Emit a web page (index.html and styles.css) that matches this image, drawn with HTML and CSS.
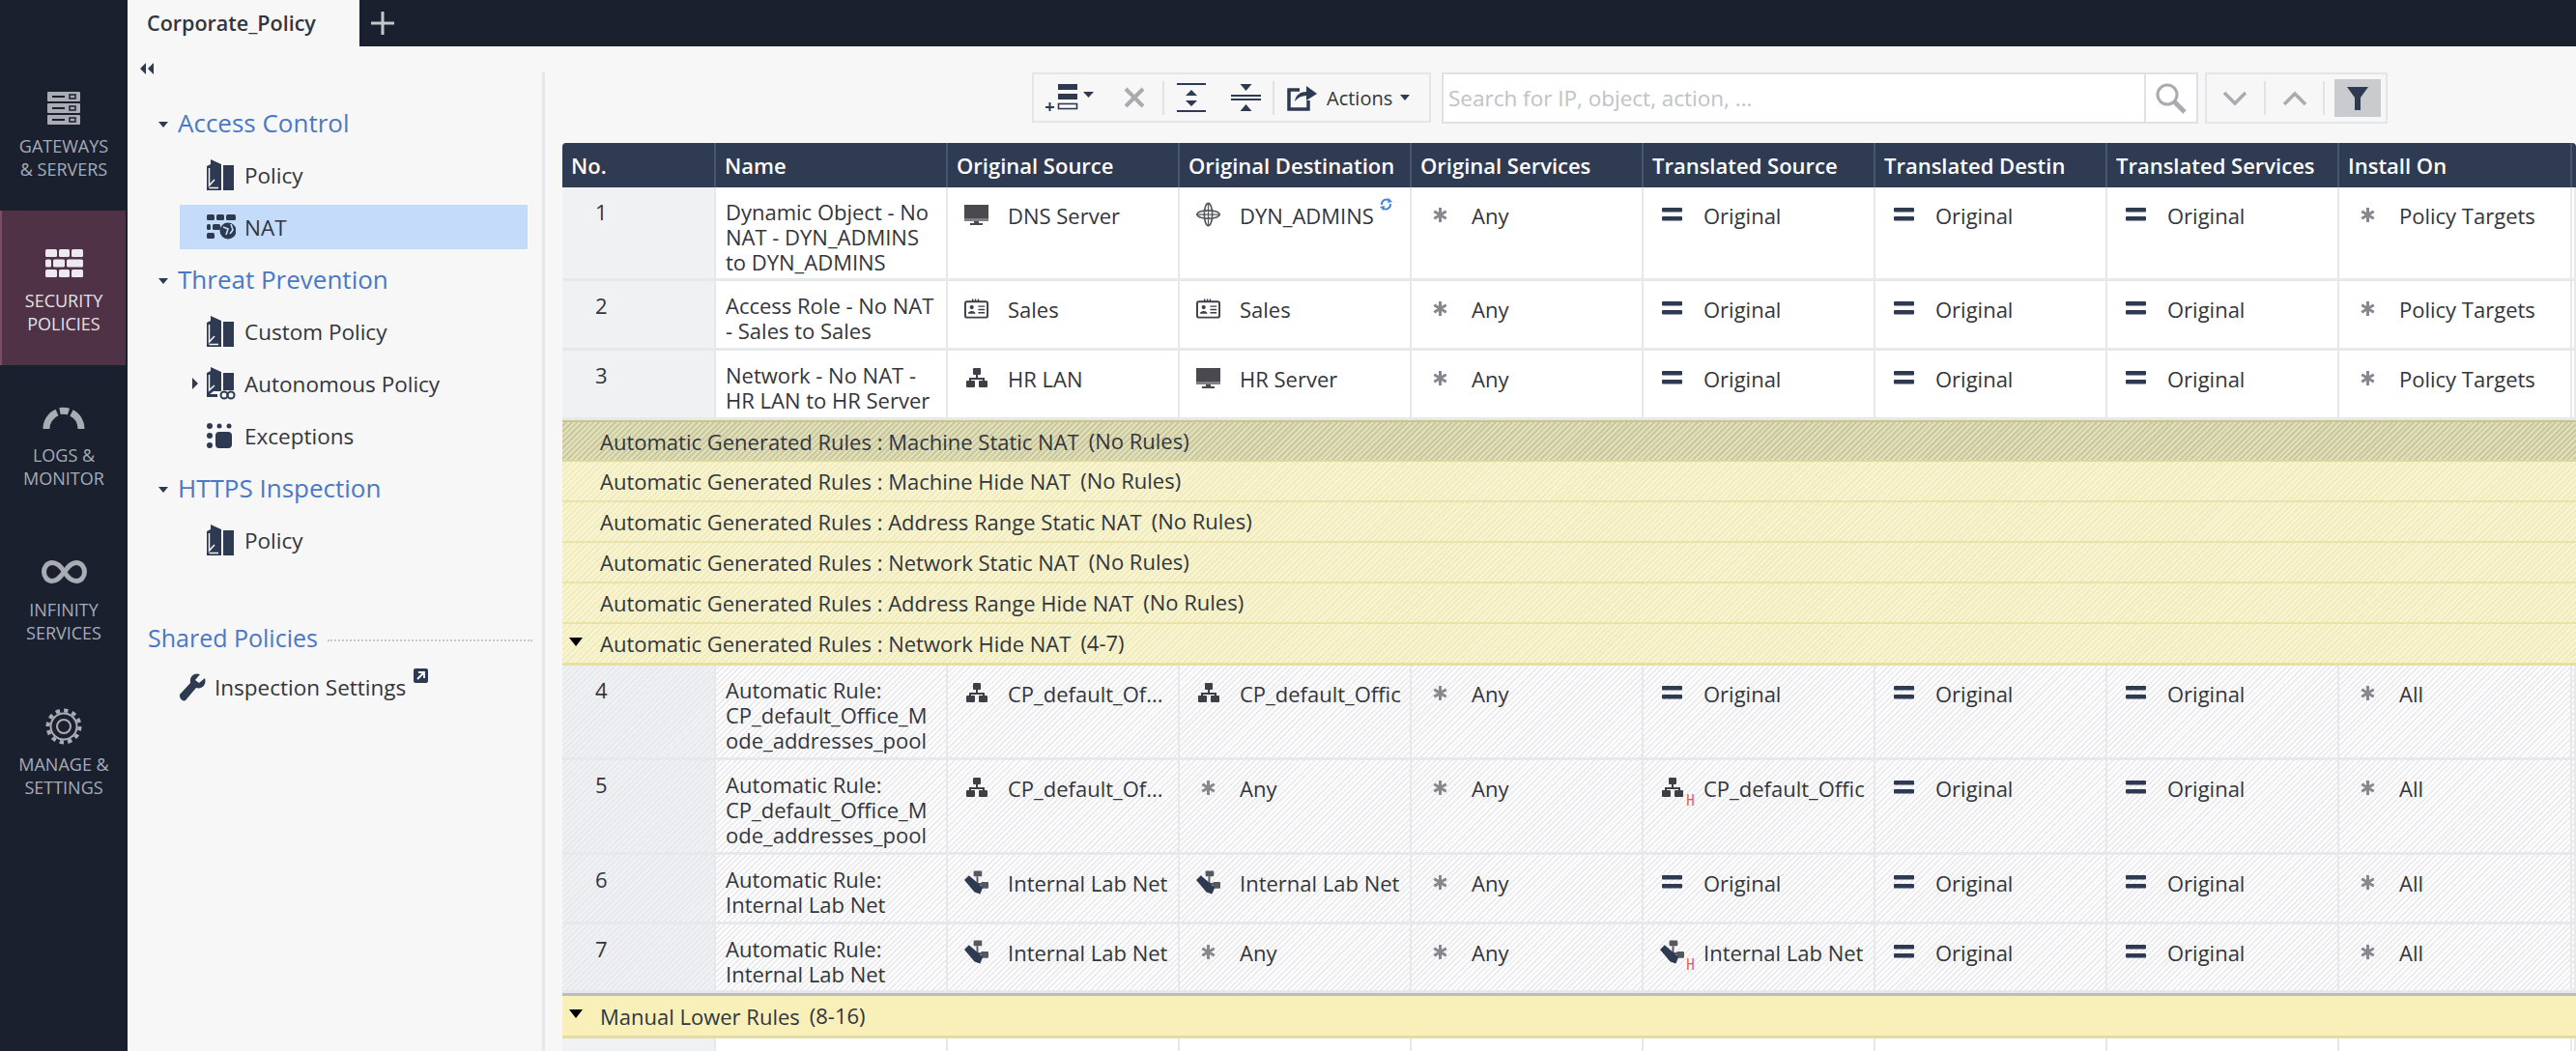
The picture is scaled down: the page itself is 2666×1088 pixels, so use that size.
FILE: index.html
```html
<!DOCTYPE html>
<html lang="en">

<head>
    <meta charset="UTF-8">
    <title>Corporate_Policy</title>
    <link rel="stylesheet" href="styles.css">
</head>

<body>
    <svg class="defs" width="0" height="0">
        <symbol id="i-book" viewBox="0 0 28 32">
            <path d="M0 7 L4 5 V0 L15 5 V32 H0 Z" fill="#2e3a52" />
            <path d="M2.5 9 V27 L8 21 M2.5 29.5 H12" fill="none" stroke="#f7f7f7" stroke-width="1.5" />
            <rect x="17" y="6" width="11" height="26" fill="#2e3a52" />
        </symbol>
        <symbol id="i-monitor" viewBox="0 0 25 21">
            <rect x="0" y="0" width="25" height="14" fill="#4a4a4e" />
            <rect x="0" y="14" width="25" height="3" fill="#7d8087" />
            <rect x="10" y="17" width="5" height="2" fill="#4a4a4e" />
            <rect x="6" y="19" width="13" height="2" fill="#4a4a4e" />
        </symbol>
        <symbol id="i-role" viewBox="0 0 26 21">
            <rect x="1" y="3" width="24" height="17" rx="2" fill="none" stroke="#3c3f46" stroke-width="2" />
            <path d="M9 0 V3 M12 0 V3 M15 0 V3" stroke="#3c3f46" stroke-width="1.5" />
            <circle cx="8" cy="9" r="2.2" fill="#3c3f46" />
            <path d="M4 16 C4 12 12 12 12 16 Z" fill="#3c3f46" />
            <path d="M15 8 H22 M15 11.5 H22 M15 15 H22" stroke="#3c3f46" stroke-width="1.5" />
        </symbol>
        <symbol id="i-tree" viewBox="0 0 22 20">
            <rect x="7" y="0" width="8" height="7" rx="1" fill="#3c3f46" />
            <path d="M11 7 V11 M4 14 V11 H18 V14" fill="none" stroke="#3c3f46" stroke-width="2" />
            <rect x="0" y="13" width="9" height="7" rx="1" fill="#3c3f46" />
            <rect x="13" y="13" width="9" height="7" rx="1" fill="#3c3f46" />
        </symbol>
        <symbol id="i-dyn" viewBox="0 0 30 30">
            <g fill="none" stroke="#55585e" stroke-width="2">
                <ellipse cx="15" cy="15" rx="14" ry="5" />
                <ellipse cx="15" cy="15" rx="5" ry="14" />
            </g>
            <path d="M15 1 V29 M1 15 H29" stroke="#55585e" stroke-width="1.5" />
        </symbol>
        <symbol id="i-any" viewBox="0 0 18 18">
            <path d="M9 0 V18 M1.5 4.5 L16.5 13.5 M16.5 4.5 L1.5 13.5" stroke="#85888e" stroke-width="3.6" />
        </symbol>
        <symbol id="i-same" viewBox="0 0 21 14">
            <rect x="0" y="0" width="21" height="4.5" rx="1" fill="#2e3a52" />
            <rect x="0" y="9" width="21" height="4.5" rx="1" fill="#2e3a52" />
        </symbol>
        <symbol id="i-lab" viewBox="0 0 26 25">
            <rect x="10" y="0" width="9" height="6" rx="1" fill="#55585e" />
            <path d="M14 6 V14 H20" fill="none" stroke="#55585e" stroke-width="2" />
            <rect x="18" y="12" width="8" height="7" rx="1" fill="#55585e" />
            <path d="M0 10 L5 5 L20 18 L17 25 L11 23 Z" fill="#2e3a52" />
        </symbol>
    </svg>

    <div class="app">
        <aside class="rail">
            <div class="rail-item">
                <div class="rail-icon">
                    <svg width="34" height="34" viewBox="0 0 34 34">
                        <g fill="#a9adb3">
                            <rect y="0" width="34" height="10" rx="1" />
                            <rect y="12" width="34" height="10" rx="1" />
                            <rect y="24" width="34" height="10" rx="1" />
                        </g>
                        <path d="M5 5 H18 M5 17 H18 M5 29 H18" stroke="#1a202e" stroke-width="2" />
                        <path d="M23 3 h6 v4 h-6 Z M23 15 h6 v4 h-6 Z M23 27 h6 v4 h-6 Z" fill="none" stroke="#1a202e" stroke-width="1.5" />
                    </svg>
                </div>
                <div class="rail-label">GATEWAYS<br>&amp; SERVERS</div>
            </div>
            <div class="rail-item rail-active">
                <div class="rail-icon">
                    <svg width="39" height="29" viewBox="0 0 39 29">
                        <g fill="#eceaf0">
                            <rect x="0" y="0" width="12" height="8" rx="1.5" />
                            <rect x="14" y="0" width="11" height="8" rx="1.5" />
                            <rect x="27" y="0" width="12" height="8" rx="1.5" />
                            <rect x="0" y="10.5" width="6" height="8" rx="1.5" />
                            <rect x="8" y="10.5" width="12" height="8" rx="1.5" />
                            <rect x="22" y="10.5" width="17" height="8" rx="1.5" />
                            <rect x="0" y="21" width="12" height="8" rx="1.5" />
                            <rect x="14" y="21" width="11" height="8" rx="1.5" />
                            <rect x="27" y="21" width="12" height="8" rx="1.5" />
                        </g>
                    </svg>
                </div>
                <div class="rail-label">SECURITY<br>POLICIES</div>
            </div>
            <div class="rail-item">
                <div class="rail-icon">
                    <svg width="44" height="24" viewBox="0 0 44 24">
                        <g fill="none" stroke="#a9adb3" stroke-width="7">
                            <path d="M4 24 A18 18 0 0 1 15 7" />
                            <path d="M18 5.5 A18 18 0 0 1 27 6" />
                            <path d="M30 7.5 A18 18 0 0 1 40 24" />
                        </g>
                    </svg>
                </div>
                <div class="rail-label">LOGS &amp;<br>MONITOR</div>
            </div>
            <div class="rail-item">
                <div class="rail-icon">
                    <svg width="49" height="26" viewBox="0 0 49 26">
                        <path d="M24.5 13 C19 4 15 3.5 12 3.5 C7 3.5 3.5 8 3.5 13 C3.5 18 7 22.5 12 22.5 C18 22.5 21 17 24.5 13 C28 9 31 3.5 37 3.5 C42 3.5 45.5 8 45.5 13 C45.5 18 42 22.5 37 22.5 C34 22.5 30 22 24.5 13 Z" fill="none" stroke="#a9adb3" stroke-width="5" />
                    </svg>
                </div>
                <div class="rail-label">INFINITY<br>SERVICES</div>
            </div>
            <div class="rail-item">
                <div class="rail-icon">
                    <svg width="38" height="38" viewBox="0 0 38 38">
                        <g fill="none" stroke="#a9adb3">
                            <circle cx="19" cy="19" r="16.5" stroke-width="4" stroke-dasharray="4.3 4.3" />
                            <circle cx="19" cy="19" r="13.5" stroke-width="2" />
                            <circle cx="19" cy="19" r="7" stroke-width="2" />
                        </g>
                    </svg>
                </div>
                <div class="rail-label">MANAGE &amp;<br>SETTINGS</div>
            </div>
        </aside>

        <div class="main">
            <header class="tabs">
                <div class="tab">Corporate_Policy</div>
                <svg class="tab-add" width="24" height="24" viewBox="0 0 24 24">
                    <path d="M12 0 V24 M0 12 H24" stroke="#c4c7cc" stroke-width="3" />
                </svg>
            </header>

            <div class="workspace">
                <nav class="nav">
                    <svg class="nav-collapse" width="14" height="12" viewBox="0 0 14 12">
                        <path d="M6 0 V12 L0 6 Z M14 0 V12 L8 6 Z" fill="#2e3a52" />
                    </svg>
                    <div class="tree">
                        <div class="tree-head"><span class="caret"></span>Access Control</div>
                        <div class="tree-item"><svg class="tree-icon" width="28" height="32"><use href="#i-book" /></svg>Policy</div>
                        <div class="tree-item tree-selected">
                            <svg class="tree-icon" width="30" height="26" viewBox="0 0 30 26">
                                <g fill="#2e3a52">
                                    <rect x="0" y="0" width="8" height="6" rx="1.5" />
                                    <rect x="10" y="0" width="8" height="6" rx="1.5" />
                                    <rect x="20" y="0" width="10" height="6" rx="1.5" />
                                    <rect x="0" y="10" width="4" height="6" rx="1.5" />
                                    <rect x="6" y="10" width="8" height="6" rx="1.5" />
                                    <rect x="0" y="19" width="8" height="6" rx="1.5" />
                                    <circle cx="22" cy="17" r="8.5" />
                                </g>
                                <path d="M17 13 L22 15 L20 21 M25 10 L27 16 L24 20" fill="none" stroke="#c4dcfa" stroke-width="1.6" />
                            </svg>NAT
                        </div>
                        <div class="tree-head"><span class="caret"></span>Threat Prevention</div>
                        <div class="tree-item"><svg class="tree-icon" width="28" height="32"><use href="#i-book" /></svg>Custom Policy</div>
                        <div class="tree-item">
                            <span class="caret-right"></span>
                            <svg class="tree-icon" width="30" height="34" viewBox="0 0 30 34">
                                <g fill="#2e3a52">
                                    <path d="M0 6 L4 4 V0 L15 5 V25 H7 L3 28 H11 V31 H0 Z" />
                                    <rect x="17" y="6" width="11" height="18" />
                                </g>
                                <path d="M2.5 8 V24 L8 19" fill="none" stroke="#f7f7f7" stroke-width="1.5" />
                                <circle cx="18" cy="29" r="3.5" fill="none" stroke="#2e3a52" stroke-width="2" />
                                <circle cx="25" cy="29" r="3.5" fill="none" stroke="#2e3a52" stroke-width="2" />
                            </svg>Autonomous Policy
                        </div>
                        <div class="tree-item">
                            <svg class="tree-icon" width="26" height="26" viewBox="0 0 26 26">
                                <g fill="#2e3a52">
                                    <circle cx="3" cy="3" r="3" />
                                    <circle cx="13" cy="3" r="2.5" />
                                    <circle cx="23" cy="3" r="2.5" />
                                    <circle cx="3" cy="13" r="3" />
                                    <circle cx="3" cy="23" r="3" />
                                    <rect x="9" y="9" width="17" height="17" rx="4" />
                                </g>
                            </svg>Exceptions
                        </div>
                        <div class="tree-head"><span class="caret"></span>HTTPS Inspection</div>
                        <div class="tree-item"><svg class="tree-icon" width="28" height="32"><use href="#i-book" /></svg>Policy</div>
                    </div>
                    <div class="shared-head">
                        <span>Shared Policies</span>
                        <span class="shared-dots"></span>
                    </div>
                    <div class="shared-item">
                        <svg class="shared-icon" width="27" height="30" viewBox="0 0 27 30">
                            <path d="M26 6 L20 11 L16 8 L21 2 C15 0 10 4 11 11 L0 23 C-1 26 3 31 6 29 L17 16 C24 18 28 12 26 6 Z" fill="#2e3a52" />
                        </svg>
                        Inspection Settings
                        <svg class="external-icon" width="15" height="15" viewBox="0 0 15 15">
                            <rect width="15" height="15" rx="2" fill="#2e3a52" />
                            <path d="M5 4 H11 V10 M11 4 L4 11" fill="none" stroke="#fff" stroke-width="1.8" />
                        </svg>
                    </div>
                </nav>
                <div class="divider"></div>

                <section class="content">
                    <div class="toolbar">
                        <div class="tool-box">
                            <svg class="t-add" width="50" height="28" viewBox="0 0 50 28">
                                <g fill="#2e3a52">
                                    <rect x="13" y="0" width="20" height="6" />
                                    <rect x="13" y="10" width="20" height="6" />
                                    <path d="M0 23 H9 V25 H0 Z M3.5 19 H5.5 V28 H3.5 Z" />
                                    <path d="M39 8 H50 L44.5 14 Z" />
                                </g>
                                <rect x="13.5" y="20.5" width="19" height="5" fill="#fff" stroke="#2e3a52" stroke-width="1.6" />
                            </svg>
                            <svg class="t-del" width="22" height="22" viewBox="0 0 22 22">
                                <path d="M2 2 L20 20 M20 2 L2 20" stroke="#a9abb0" stroke-width="4" />
                            </svg>
                            <span class="t-sep t-sep-first"></span>
                            <svg class="t-expand" width="30" height="30" viewBox="0 0 30 30">
                                <path d="M0 1 H30 M0 29 H30" stroke="#2e3a52" stroke-width="2" />
                                <path d="M15 7 L21 13 H9 Z M15 24 L9 18 H21 Z" fill="#2e3a52" />
                            </svg>
                            <svg class="t-collapse" width="31" height="30" viewBox="0 0 31 30">
                                <path d="M0 13 H31 M0 17 H31" stroke="#2e3a52" stroke-width="2" />
                                <path d="M15.5 8 L9.5 1 H21.5 Z M15.5 22 L21.5 29 H9.5 Z" fill="#2e3a52" />
                            </svg>
                            <span class="t-sep t-sep-second"></span>
                            <svg class="t-share" width="31" height="28" viewBox="0 0 31 28">
                                <path d="M13 6 H2 V26 H22 V17" fill="none" stroke="#2e3a52" stroke-width="3.5" />
                                <path d="M8 18 C9 11 14 8 20 8 V2 L31 10 L20 17 V12 C15 12 11 14 8 18 Z" fill="#2e3a52" />
                            </svg>
                            <span class="t-actions">Actions</span>
                            <span class="t-caret"></span>
                        </div>
                        <div class="search">
                            <div class="search-input">Search for IP, object, action, ...</div>
                            <div class="search-btn">
                                <svg width="32" height="32" viewBox="0 0 32 32">
                                    <circle cx="12" cy="12" r="10" fill="none" stroke="#a9abb0" stroke-width="3" />
                                    <path d="M19 19 L30 30" stroke="#a9abb0" stroke-width="5" />
                                </svg>
                            </div>
                        </div>
                        <div class="tool-box find-box">
                            <svg class="f-down" width="26" height="16" viewBox="0 0 26 16">
                                <path d="M2 2 L13 13 L24 2" fill="none" stroke="#a9abb0" stroke-width="3.5" />
                            </svg>
                            <span class="f-sep f-sep-first"></span>
                            <svg class="f-up" width="26" height="16" viewBox="0 0 26 16">
                                <path d="M2 14 L13 3 L24 14" fill="none" stroke="#a9abb0" stroke-width="3.5" />
                            </svg>
                            <span class="f-sep"></span>
                            <div class="f-filter">
                                <svg width="22" height="24" viewBox="0 0 22 24">
                                    <path d="M0 0 H22 L14 11 V24 H8 V11 Z" fill="#2e3a52" />
                                </svg>
                            </div>
                        </div>
                    </div>

                    <div class="rules">
                        <div class="grid head-row">
                            <div class="hcell">No.</div>
                            <div class="hcell">Name</div>
                            <div class="hcell">Original Source</div>
                            <div class="hcell">Original Destination</div>
                            <div class="hcell">Original Services</div>
                            <div class="hcell">Translated Source</div>
                            <div class="hcell">Translated Destin</div>
                            <div class="hcell">Translated Services</div>
                            <div class="hcell">Install On</div>
                            <div class="hcell"></div>
                        </div>

                        <div class="grid rule rule-tall">
                            <div class="cell no">1</div>
                            <div class="cell name">Dynamic Object - No<br>NAT - DYN_ADMINS<br>to DYN_ADMINS</div>
                            <div class="cell obj"><span class="ico"><svg width="25" height="21"><use href="#i-monitor" /></svg></span><span class="txt">DNS Server</span></div>
                            <div class="cell obj"><span class="ico"><svg width="30" height="30"><use href="#i-dyn" /></svg></span><span class="txt">DYN_ADMINS</span>
                                <svg class="dyn-mark" width="13" height="13" viewBox="0 0 13 13">
                                    <path d="M2 7 A5 5 0 0 1 10 2.5 M11 6 A5 5 0 0 1 3 10.5" fill="none" stroke="#4a86d8" stroke-width="2" />
                                    <path d="M9 0 L13 4 L8 5 Z M4 13 L0 9 L5 8 Z" fill="#4a86d8" />
                                </svg>
                            </div>
                            <div class="cell obj"><span class="ico"><svg width="15" height="15"><use href="#i-any" /></svg></span><span class="txt">Any</span></div>
                            <div class="cell obj"><span class="ico"><svg width="21" height="14"><use href="#i-same" /></svg></span><span class="txt">Original</span></div>
                            <div class="cell obj"><span class="ico"><svg width="21" height="14"><use href="#i-same" /></svg></span><span class="txt">Original</span></div>
                            <div class="cell obj"><span class="ico"><svg width="21" height="14"><use href="#i-same" /></svg></span><span class="txt">Original</span></div>
                            <div class="cell obj"><span class="ico"><svg width="15" height="15"><use href="#i-any" /></svg></span><span class="txt">Policy Targets</span></div>
                            <div class="cell"></div>
                        </div>
                        <div class="grid rule rule-mid">
                            <div class="cell no">2</div>
                            <div class="cell name">Access Role - No NAT<br>- Sales to Sales</div>
                            <div class="cell obj"><span class="ico"><svg width="26" height="21"><use href="#i-role" /></svg></span><span class="txt">Sales</span></div>
                            <div class="cell obj"><span class="ico"><svg width="26" height="21"><use href="#i-role" /></svg></span><span class="txt">Sales</span></div>
                            <div class="cell obj"><span class="ico"><svg width="15" height="15"><use href="#i-any" /></svg></span><span class="txt">Any</span></div>
                            <div class="cell obj"><span class="ico"><svg width="21" height="14"><use href="#i-same" /></svg></span><span class="txt">Original</span></div>
                            <div class="cell obj"><span class="ico"><svg width="21" height="14"><use href="#i-same" /></svg></span><span class="txt">Original</span></div>
                            <div class="cell obj"><span class="ico"><svg width="21" height="14"><use href="#i-same" /></svg></span><span class="txt">Original</span></div>
                            <div class="cell obj"><span class="ico"><svg width="15" height="15"><use href="#i-any" /></svg></span><span class="txt">Policy Targets</span></div>
                            <div class="cell"></div>
                        </div>
                        <div class="grid rule rule-mid">
                            <div class="cell no">3</div>
                            <div class="cell name">Network - No NAT -<br>HR LAN to HR Server</div>
                            <div class="cell obj"><span class="ico"><svg width="22" height="20"><use href="#i-tree" /></svg></span><span class="txt">HR LAN</span></div>
                            <div class="cell obj"><span class="ico"><svg width="25" height="21"><use href="#i-monitor" /></svg></span><span class="txt">HR Server</span></div>
                            <div class="cell obj"><span class="ico"><svg width="15" height="15"><use href="#i-any" /></svg></span><span class="txt">Any</span></div>
                            <div class="cell obj"><span class="ico"><svg width="21" height="14"><use href="#i-same" /></svg></span><span class="txt">Original</span></div>
                            <div class="cell obj"><span class="ico"><svg width="21" height="14"><use href="#i-same" /></svg></span><span class="txt">Original</span></div>
                            <div class="cell obj"><span class="ico"><svg width="21" height="14"><use href="#i-same" /></svg></span><span class="txt">Original</span></div>
                            <div class="cell obj"><span class="ico"><svg width="15" height="15"><use href="#i-any" /></svg></span><span class="txt">Policy Targets</span></div>
                            <div class="cell"></div>
                        </div>

                        <div class="group group-selected"><span class="group-title">Automatic Generated Rules : Machine Static NAT</span><span class="group-range">(No Rules)</span></div>
                        <div class="group"><span class="group-title">Automatic Generated Rules : Machine Hide NAT</span><span class="group-range">(No Rules)</span></div>
                        <div class="group"><span class="group-title">Automatic Generated Rules : Address Range Static NAT</span><span class="group-range">(No Rules)</span></div>
                        <div class="group"><span class="group-title">Automatic Generated Rules : Network Static NAT</span><span class="group-range">(No Rules)</span></div>
                        <div class="group"><span class="group-title">Automatic Generated Rules : Address Range Hide NAT</span><span class="group-range">(No Rules)</span></div>
                        <div class="group group-open"><span class="group-caret"></span><span class="group-title">Automatic Generated Rules : Network Hide NAT</span><span class="group-range">(4-7)</span></div>

                        <div class="grid rule rule-tall rule-auto">
                            <div class="cell no">4</div>
                            <div class="cell name">Automatic Rule:<br>CP_default_Office_M<br>ode_addresses_pool</div>
                            <div class="cell obj"><span class="ico"><svg width="22" height="20"><use href="#i-tree" /></svg></span><span class="txt">CP_default_Of...</span></div>
                            <div class="cell obj"><span class="ico"><svg width="22" height="20"><use href="#i-tree" /></svg></span><span class="txt">CP_default_Offic</span></div>
                            <div class="cell obj"><span class="ico"><svg width="15" height="15"><use href="#i-any" /></svg></span><span class="txt">Any</span></div>
                            <div class="cell obj"><span class="ico"><svg width="21" height="14"><use href="#i-same" /></svg></span><span class="txt">Original</span></div>
                            <div class="cell obj"><span class="ico"><svg width="21" height="14"><use href="#i-same" /></svg></span><span class="txt">Original</span></div>
                            <div class="cell obj"><span class="ico"><svg width="21" height="14"><use href="#i-same" /></svg></span><span class="txt">Original</span></div>
                            <div class="cell obj"><span class="ico"><svg width="15" height="15"><use href="#i-any" /></svg></span><span class="txt">All</span></div>
                            <div class="cell"></div>
                        </div>
                        <div class="grid rule rule-tall rule-auto">
                            <div class="cell no">5</div>
                            <div class="cell name">Automatic Rule:<br>CP_default_Office_M<br>ode_addresses_pool</div>
                            <div class="cell obj"><span class="ico"><svg width="22" height="20"><use href="#i-tree" /></svg></span><span class="txt">CP_default_Of...</span></div>
                            <div class="cell obj"><span class="ico"><svg width="15" height="15"><use href="#i-any" /></svg></span><span class="txt">Any</span></div>
                            <div class="cell obj"><span class="ico"><svg width="15" height="15"><use href="#i-any" /></svg></span><span class="txt">Any</span></div>
                            <div class="cell obj"><span class="ico"><svg width="22" height="20"><use href="#i-tree" /></svg><span class="hide-mark">H</span></span><span class="txt">CP_default_Offic</span></div>
                            <div class="cell obj"><span class="ico"><svg width="21" height="14"><use href="#i-same" /></svg></span><span class="txt">Original</span></div>
                            <div class="cell obj"><span class="ico"><svg width="21" height="14"><use href="#i-same" /></svg></span><span class="txt">Original</span></div>
                            <div class="cell obj"><span class="ico"><svg width="15" height="15"><use href="#i-any" /></svg></span><span class="txt">All</span></div>
                            <div class="cell"></div>
                        </div>
                        <div class="grid rule rule-mid rule-auto">
                            <div class="cell no">6</div>
                            <div class="cell name">Automatic Rule:<br>Internal Lab Net</div>
                            <div class="cell obj"><span class="ico"><svg width="26" height="25"><use href="#i-lab" /></svg></span><span class="txt">Internal Lab Net</span></div>
                            <div class="cell obj"><span class="ico"><svg width="26" height="25"><use href="#i-lab" /></svg></span><span class="txt">Internal Lab Net</span></div>
                            <div class="cell obj"><span class="ico"><svg width="15" height="15"><use href="#i-any" /></svg></span><span class="txt">Any</span></div>
                            <div class="cell obj"><span class="ico"><svg width="21" height="14"><use href="#i-same" /></svg></span><span class="txt">Original</span></div>
                            <div class="cell obj"><span class="ico"><svg width="21" height="14"><use href="#i-same" /></svg></span><span class="txt">Original</span></div>
                            <div class="cell obj"><span class="ico"><svg width="21" height="14"><use href="#i-same" /></svg></span><span class="txt">Original</span></div>
                            <div class="cell obj"><span class="ico"><svg width="15" height="15"><use href="#i-any" /></svg></span><span class="txt">All</span></div>
                            <div class="cell"></div>
                        </div>
                        <div class="grid rule rule-short rule-auto">
                            <div class="cell no">7</div>
                            <div class="cell name">Automatic Rule:<br>Internal Lab Net</div>
                            <div class="cell obj"><span class="ico"><svg width="26" height="25"><use href="#i-lab" /></svg></span><span class="txt">Internal Lab Net</span></div>
                            <div class="cell obj"><span class="ico"><svg width="15" height="15"><use href="#i-any" /></svg></span><span class="txt">Any</span></div>
                            <div class="cell obj"><span class="ico"><svg width="15" height="15"><use href="#i-any" /></svg></span><span class="txt">Any</span></div>
                            <div class="cell obj"><span class="ico"><svg width="26" height="25"><use href="#i-lab" /></svg><span class="hide-mark">H</span></span><span class="txt">Internal Lab Net</span></div>
                            <div class="cell obj"><span class="ico"><svg width="21" height="14"><use href="#i-same" /></svg></span><span class="txt">Original</span></div>
                            <div class="cell obj"><span class="ico"><svg width="21" height="14"><use href="#i-same" /></svg></span><span class="txt">Original</span></div>
                            <div class="cell obj"><span class="ico"><svg width="15" height="15"><use href="#i-any" /></svg></span><span class="txt">All</span></div>
                            <div class="cell"></div>
                        </div>

                        <div class="section-row"><span class="group-caret"></span><span class="group-title">Manual Lower Rules</span><span class="group-range">(8-16)</span></div>

                        <div class="grid rule rule-end">
                            <div class="cell no"></div>
                            <div class="cell"></div>
                            <div class="cell"></div>
                            <div class="cell"></div>
                            <div class="cell"></div>
                            <div class="cell"></div>
                            <div class="cell"></div>
                            <div class="cell"></div>
                            <div class="cell"></div>
                            <div class="cell"></div>
                        </div>
                    </div>
                </section>
            </div>
        </div>
    </div>
</body>

</html>
```
FILE: styles.css
```css
/* Base */
html,
body {
    margin: 0;
    height: 100%;
    overflow: hidden;
}

body {
    font-family: "Open Sans", "Noto Sans", sans-serif;
    color: #33353d;
    background-color: #f7f7f7;
}

.defs {
    position: absolute;
}

.app {
    display: flex;
    height: 1088px;
    overflow: hidden;
}

/* Left rail */
.rail {
    width: 132px;
    flex: none;
    padding-top: 58px;
    box-sizing: border-box;
    background-color: #1a202e;
}

.rail-item {
    height: 160px;
    box-sizing: border-box;
    padding-top: 30px;
    text-align: center;
    color: #a6acb7;
}

.rail-active {
    width: 130px;
    border-left: 2px solid #7d4a68;
    background-color: #4f3245;
    color: #e2e2e8;
}

.rail-icon {
    display: flex;
    align-items: center;
    justify-content: center;
    height: 48px;
    margin-bottom: 4px;
}

.rail-label {
    font-size: 18px;
    line-height: 23.5px;
    white-space: nowrap;
}

/* Tabs */
.main {
    flex: 1;
    min-width: 0;
    display: flex;
    flex-direction: column;
}

.tabs {
    display: flex;
    align-items: center;
    height: 48px;
    flex: none;
    background-color: #1a202e;
}

.tab {
    width: 240px;
    height: 48px;
    box-sizing: border-box;
    padding-left: 20px;
    font-size: 21.5px;
    font-weight: 600;
    line-height: 48px;
    background-color: #f7f7f7;
}

.tab-add {
    margin-left: 12px;
}

.workspace {
    flex: 1;
    display: flex;
    min-height: 0;
}

/* Policy tree */
.nav {
    position: relative;
    width: 429px;
    flex: none;
    box-sizing: border-box;
    padding-top: 52px;
}

.nav-collapse {
    position: absolute;
    left: 13px;
    top: 17px;
}

.tree-head,
.tree-item {
    display: flex;
    align-items: center;
    height: 54px;
}

.tree-head {
    padding-left: 52px;
    font-size: 26px;
    color: #4a78c8;
}

.caret {
    position: absolute;
    left: 32px;
    width: 0;
    height: 0;
    margin-top: 3px;
    border-top: 6px solid #2e3a52;
    border-left: 5px solid transparent;
    border-right: 5px solid transparent;
}

.tree-item {
    position: relative;
    padding-left: 121px;
    font-size: 22.5px;
}

.tree-icon {
    position: absolute;
    left: 82px;
}

.tree-selected {
    margin: 4px 15px 4px 54px;
    height: 46px;
    padding-left: 67px;
    background-color: #c4dcfa;
}

.tree-selected .tree-icon {
    left: 28px;
}

.caret-right {
    position: absolute;
    left: 67px;
    width: 0;
    height: 0;
    border-left: 6px solid #2e3a52;
    border-top: 6px solid transparent;
    border-bottom: 6px solid transparent;
}

.shared-head {
    display: flex;
    align-items: center;
    margin-top: 47px;
    padding-left: 21px;
    height: 54px;
    font-size: 25px;
    color: #4a78c8;
}

.shared-dots {
    flex: 1;
    margin: 6px 10px 0 10px;
    border-top: 2px dotted #c6c9ce;
}

.shared-item {
    display: flex;
    align-items: center;
    height: 48px;
    padding-left: 54px;
    font-size: 22.5px;
}

.shared-icon {
    margin-right: 9px;
}

.external-icon {
    margin: -24px 0 0 8px;
}

.divider {
    width: 3px;
    margin-top: 27px;
    flex: none;
    background-color: #e3e6ea;
}

/* Right side */
.content {
    flex: 1;
    min-width: 0;
    padding: 27px 0 0 18px;
}

.toolbar {
    display: flex;
    align-items: flex-start;
    height: 52px;
    margin-bottom: 21px;
}

.tool-box {
    display: flex;
    align-items: center;
    width: 413px;
    height: 52px;
    flex: none;
    box-sizing: border-box;
    margin-left: 486px;
    border: 2px solid #e3e5e8;
}

.t-add {
    margin-left: 12px;
}

.t-del {
    margin-left: 31px;
}

.t-sep,
.f-sep {
    width: 2px;
    height: 35px;
    flex: none;
    background-color: #e0e2e6;
}

.t-sep-first {
    margin-left: 18px;
}

.t-expand {
    margin-left: 13px;
}

.t-collapse {
    margin-left: 26px;
}

.t-sep-second {
    margin-left: 12px;
}

.t-share {
    margin-left: 13px;
}

.t-actions {
    margin-left: 10px;
    font-size: 20px;
}

.t-caret {
    margin-left: 8px;
    border-top: 6px solid #2e3a52;
    border-left: 5px solid transparent;
    border-right: 5px solid transparent;
}

.search {
    display: flex;
    width: 783px;
    height: 53px;
    flex: none;
    box-sizing: border-box;
    margin-left: 11px;
    border: 2px solid #dfe1e5;
    background-color: #fff;
}

.search-input {
    flex: 1;
    padding-left: 5px;
    font-size: 22.5px;
    line-height: 49px;
    color: #bfc2c8;
}

.search-btn {
    display: flex;
    align-items: center;
    justify-content: center;
    width: 52px;
    border-left: 2px solid #dfe1e5;
}

.find-box {
    width: 189px;
    height: 53px;
    margin-left: 7px;
}

.f-down {
    margin-left: 16px;
}

.f-sep-first {
    margin-left: 17px;
}

.f-up {
    margin: 0 16px 0 17px;
}

.f-filter {
    display: flex;
    align-items: center;
    justify-content: center;
    width: 48px;
    height: 39px;
    margin-left: 10px;
    background-color: #c9cbce;
}

/* Rules table */
.rules {
    width: 2084px;
    font-size: 22px;
}

.grid {
    display: grid;
    grid-template-columns: 159px repeat(7, 240px) 241px 1fr;
}

.head-row {
    height: 46px;
    border-radius: 4px 4px 0 0;
    background-color: #2f3b52;
}

.hcell {
    padding-left: 9px;
    border-right: 2px solid #48556e;
    font-size: 22px;
    font-weight: 600;
    line-height: 46px;
    white-space: nowrap;
    overflow: hidden;
    color: #fff;
}

.hcell:last-child {
    border-right: none;
}

.rule {
    box-sizing: border-box;
    border-bottom: 3px solid #e6e8ec;
    background-color: #fff;
}

.rule-tall {
    height: 97px;
}

.rule-mid {
    height: 72px;
}

.rule-short {
    height: 71px;
}

.rule-end {
    height: 13px;
    border-bottom: none;
}

.rule-auto {
    background: repeating-linear-gradient(135deg, #fff 0 2px, #ededf0 2px 4px);
}

.rule-auto.rule-tall {
    height: 98px;
}

.cell {
    min-width: 0;
    box-sizing: border-box;
    border-right: 2px solid #e6e8ec;
    line-height: 26px;
}

.no {
    padding: 12px 0 0 34px;
    background-color: #f0f1f3;
}

.rule-auto .no {
    background: repeating-linear-gradient(135deg, #f0f1f4 0 2px, #e7e9ec 2px 4px);
}

.name {
    padding: 12px 0 0 10px;
    white-space: nowrap;
    overflow: hidden;
}

.obj {
    display: flex;
    align-items: flex-start;
    padding: 15px 9px 0 17px;
    overflow: hidden;
    white-space: nowrap;
}

.ico {
    position: relative;
    display: flex;
    align-items: center;
    justify-content: center;
    width: 25px;
    height: 26px;
    flex: none;
    margin-right: 20px;
}

.txt {
    margin-top: 1px;
}

.dyn-mark {
    flex: none;
    margin: -4px 0 0 6px;
}

.hide-mark {
    position: absolute;
    left: 27px;
    top: 18px;
    font-size: 17px;
    font-stretch: 75%;
    line-height: 16px;
    color: #f05050;
}

/* Rule groups */
.group,
.section-row {
    position: relative;
    display: flex;
    align-items: center;
    box-sizing: border-box;
    padding-left: 39px;
}

.group {
    height: 42px;
    border-bottom: 2px solid #e9e3a8;
    background: repeating-linear-gradient(135deg, #f9f5d3 0 2px, #f1ecbe 2px 4px);
}

.group-selected {
    height: 43px;
    border-top: 2px solid #c9c688;
    border-bottom: 2px solid #dcd9a0;
    background: repeating-linear-gradient(135deg, #e2e0ba 0 2px, #c9c89f 2px 4px);
}

.group-open {
    height: 43px;
    border-bottom: 3px solid #e6dfa0;
}

.group-range {
    margin: -2px 0 0 10px;
}

.group-caret {
    position: absolute;
    left: 7px;
    margin-top: -4px;
    border-top: 9px solid #000;
    border-left: 7px solid transparent;
    border-right: 7px solid transparent;
}

.section-row {
    height: 47px;
    border-top: 3px solid #bcbcbc;
    border-bottom: 3px solid #e3dca4;
    background-color: #f9f0b9;
}
```
